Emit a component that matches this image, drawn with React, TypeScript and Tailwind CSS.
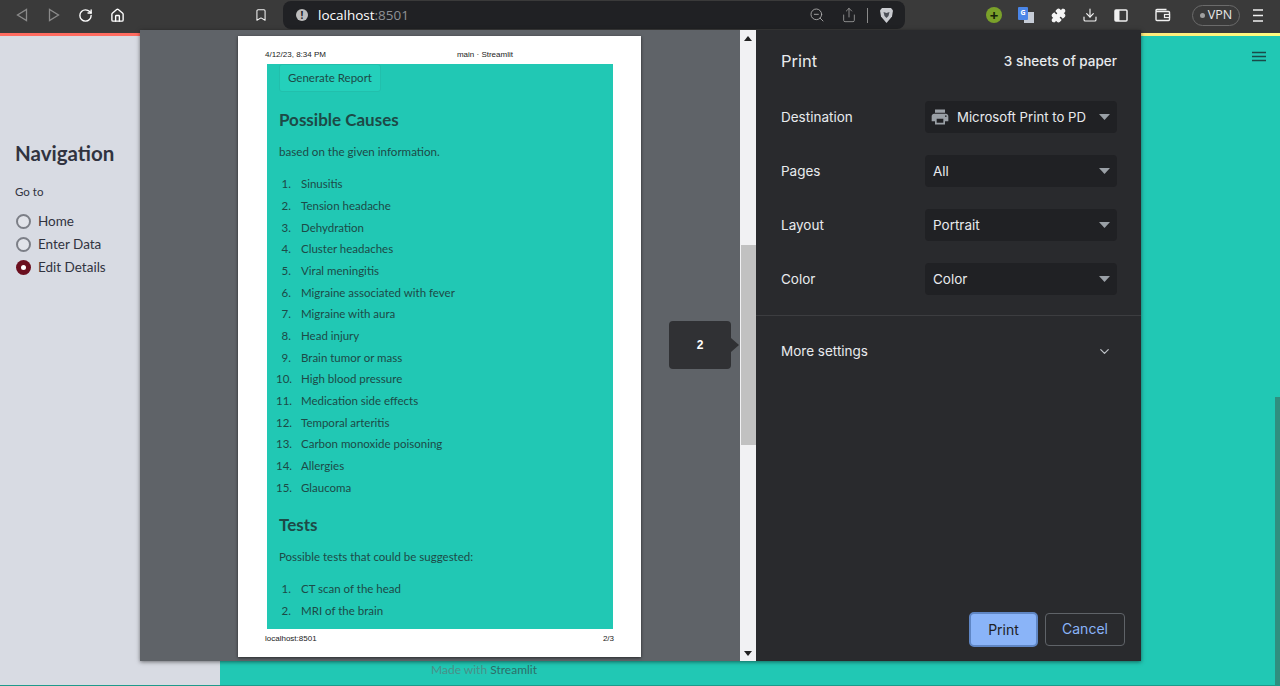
import { ChevronDown, Download, Home, Puzzle, RotateCw, Share, ZoomOut, Bookmark } from "lucide-react";

const causes = ["Sinusitis","Tension headache","Dehydration","Cluster headaches","Viral meningitis","Migraine associated with fever","Migraine with aura","Head injury","Brain tumor or mass","High blood pressure","Medication side effects","Temporal arteritis","Carbon monoxide poisoning","Allergies","Glaucoma"];
const tests = ["CT scan of the head","MRI of the brain"];

function Item({ n, text }: { n: number; text: string }) {
  return (
    <li className="flex h-[21.68px] items-center text-[11.5px] text-[#1d4a47]">
      <span className="w-[25px] pr-[10px] text-right shrink-0">{n}.</span>
      <span>{text}</span>
    </li>
  );
}

function Select({ label, value, icon }: { label: string; value: string; icon?: boolean }) {
  return (
    <div className="flex items-center justify-between h-[32px] mb-[22px]">
      <span className="text-[13.5px] text-[#e8eaed]">{label}</span>
      <div className="w-[192px] h-[32px] rounded-[4px] bg-[#202124] flex items-center pl-[8px] pr-[7px]">
        {icon && (
          <svg width="20" height="20" viewBox="0 0 24 24" className="shrink-0 ml-[-3px] mr-[4px]">
            <path d="M19 8H5c-1.66 0-3 1.34-3 3v6h4v4h12v-4h4v-6c0-1.66-1.34-3-3-3zm-3 11H8v-5h8v5zm3-7c-.55 0-1-.45-1-1s.45-1 1-1 1 .45 1 1-.45 1-1 1zm-1-9H6v4h12V3z" fill="#9aa0a6" />
          </svg>
        )}
        <span className={`${icon ? "text-[13.2px] ml-[3px] pt-[1px]" : "text-[13.5px]"} text-[#e8eaed] flex-1 whitespace-nowrap overflow-hidden`}>{value}</span>
        <svg width="11" height="6" viewBox="0 0 11 6" className="shrink-0 ml-[7px]"><path d="M0 0h11L5.5 6z" fill="#9aa0a6" /></svg>
      </div>
    </div>
  );
}

function Radio({ label, on }: { label: string; on?: boolean }) {
  return (
    <div className="flex items-center h-[23px]">
      {on ? (
        <span className="w-[15px] h-[15px] rounded-full bg-[#6b0f1f] flex items-center justify-center mr-[7px]">
          <span className="w-[5px] h-[5px] rounded-full bg-white" />
        </span>
      ) : (
        <span className="w-[15px] h-[15px] rounded-full border-2 border-[#7c7f87] bg-[#e2e4ea] mr-[7px]" />
      )}
      <span className="text-[13.5px] text-[#31333f]">{label}</span>
    </div>
  );
}

export default function App() {
  return (
    <div className="relative w-[1280px] h-[686px] overflow-hidden bg-[#21c8b4] border-b border-[#1d9a8b] font-['Lato',sans-serif]">
      {/* Browser toolbar */}
      <header className="h-[33px] pb-[3px] bg-[#3a3a3a] flex items-center text-[#f4f4f4] font-['Open_Sans',sans-serif]">
        <svg width="12" height="14" viewBox="0 0 12 14" className="ml-[16px]"><path d="M10.5 1.5v11L1.5 7z" fill="none" stroke="#8a8a8a" strokeWidth="1.3" /></svg>
        <svg width="12" height="14" viewBox="0 0 12 14" className="ml-[20px]"><path d="M1.5 1.5v11l9-5.5z" fill="none" stroke="#8a8a8a" strokeWidth="1.3" /></svg>
        <RotateCw size={15} strokeWidth={2.2} className="ml-[18px] text-white" />
        <Home size={15} strokeWidth={2.2} className="ml-[17px] text-white" />
        <Bookmark size={14} strokeWidth={1.8} className="ml-[129px]" />
        <div className="ml-[15px] w-[622px] h-[28px] rounded-[8px] bg-[#202124] flex items-center pl-[13px] pr-[11px]">
          <span className="w-[12px] h-[12px] rounded-full bg-[#bdbdbd] text-[#202124] text-[10px] font-bold flex items-center justify-center">!</span>
          <span className="ml-[10px] text-[13.5px] text-white">localhost<span className="text-[#8f9195]">:8501</span></span>
          <ZoomOut size={16} strokeWidth={1.3} className="ml-auto text-[#b0b0b0]" />
          <Share size={16} strokeWidth={1.3} className="ml-[16px] text-[#9a9a9a]" />
          <span className="w-px h-[15px] bg-[#8a8a8a] ml-[10px]" />
          <svg width="15" height="17" viewBox="0 0 15 17" className="ml-[11px]">
            <path d="M3 1h9l2 2.5-1 6-5.5 6.5L2 9.500l-1-6z" fill="#c9cbd0" />
            <path d="M4.500 5l3 1 3-1-1 4-2 2-2-2z" fill="#4d5058" />
          </svg>
        </div>
        <span className="ml-[81px] w-[16px] h-[16px] rounded-full bg-[#7aa12a] text-[#17230a] font-bold text-[15px] leading-none flex items-center justify-center">+</span>
        <span className="ml-[16px] relative w-[16px] h-[16px]">
          <span className="absolute right-0 bottom-0 w-[10px] h-[11px] bg-[#c6ccd6]" />
          <span className="absolute left-0 top-0 w-[10px] h-[13px] bg-[#4a86e8] text-white text-[7px] font-bold flex items-center justify-center rounded-[1px]">G</span>
        </span>
        <Puzzle size={15} fill="#f5f5f5" stroke="#f5f5f5" className="ml-[17px]" />
        <Download size={16} strokeWidth={1.7} className="ml-[16px]" />
        <svg width="14" height="13" viewBox="0 0 14 13" className="ml-[16px]"><rect x="1" y="1" width="12" height="11" rx="1" fill="none" stroke="#f0f0f0" strokeWidth="1.500" /><rect x="1" y="1" width="4.500" height="11" fill="#f0f0f0" /></svg>
        <svg width="17" height="14" viewBox="0 0 17 14" className="ml-[26px]"><path d="M2 3.500V11.500a1 1 0 0 0 1 1h11.500a1 1 0 0 0 1-1V4.500a1 1 0 0 0-1-1H3a1 1 0 0 1-1-1 1 1 0 0 1 1-1h9.500" fill="none" stroke="#f0f0f0" strokeWidth="1.400" /><rect x="10.500" y="6.500" width="5" height="3" fill="#3a3a3a" stroke="#f0f0f0" strokeWidth="1.200" /></svg>
        <div className="ml-[21px] w-[48px] h-[21px] rounded-full border border-[#6b6b6b] flex items-center justify-center text-[12.500px] text-[#e8e8e8]">
          <span className="w-[5px] h-[5px] rounded-full bg-[#a0a0a0] mr-[3px]" />VPN
        </div>
        <svg width="10" height="13" viewBox="0 0 10 13" className="ml-[13px]"><path d="M0 1h10M0 6.500h10M0 12h10" stroke="#f0f0f0" strokeWidth="1.500" /></svg>
      </header>

      {/* Underlying Streamlit page */}
      <div className="flex h-[652px]">
        <aside className="w-[220px] bg-[#d8dbe3] shrink-0">
          <div className="h-[3px] w-full bg-[#ff6b60]" />
          <div className="pl-[15px] pt-[104px]">
            <h2 className="text-[20.5px] font-bold text-[#31333f] leading-[26px]">Navigation</h2>
            <p className="text-[11.5px] text-[#31333f] mt-[18px] mb-[10px] leading-[16px]">Go to</p>
            <div className="pl-[1px]">
              <Radio label="Home" />
              <Radio label="Enter Data" />
              <Radio label="Edit Details" on />
            </div>
          </div>
        </aside>
        <main className="flex-1 relative">
          <div className="h-[3px] bg-[linear-gradient(90deg,#ff6b60,#fffd80)]" />
          <div className="flex justify-end pr-[14px] pt-[15px]">
            <svg width="14" height="11" viewBox="0 0 14 11"><path d="M0 1.500h14M0 5.500h14M0 9.500h14" stroke="#1a4a48" strokeWidth="1.700" /></svg>
          </div>
          <p className="absolute left-[211px] top-[628px] text-[12px] text-[#4a8f88]">Made with <span className="text-[#2e6e68]">Streamlit</span></p>
          <div className="absolute right-0 top-[364px] bottom-[-1px] w-[5px] bg-[#2f8f7f]" />
        </main>
      </div>

      {/* Print dialog */}
      <section className="absolute left-[140px] top-[30px] w-[1001px] h-[631px] flex shadow-[0_1px_4px_rgba(0,0,0,0.5)]">
        <div className="w-[616px] shrink-0 bg-[#5f6368] relative pl-[98px] pt-[6px]">
          <article className="w-[403px] h-[621px] bg-white shadow-[0_1px_3px_rgba(0,0,0,0.6)] flex flex-col font-['Liberation_Sans',sans-serif]">
            <div className="h-[28px] relative flex items-center text-[8px] text-[#222] pl-[27px] pt-[9px]">
              <span>4/12/23, 8:34 PM</span>
              <span className="ml-[131px]">main · Streamlit</span>
            </div>
            <div className="mx-[29px] w-[346px] h-[565px] bg-[#21c8b4] px-[12px] font-['Lato',sans-serif] text-[#1d4a47]">
              <button className="w-[102px] h-[28px] rounded-[3px] bg-[#24d0bb] border border-[#22bfac] text-[11.5px] text-[#1d4a47] block">Generate Report</button>
              <h3 className="mt-[17px] text-[17px] font-bold leading-[22px]">Possible Causes</h3>
              <p className="mt-[13px] text-[11.6px] leading-[16px]">based on the given information.</p>
              <ol className="mt-[13px] -ml-[3px]">
                {causes.map((c, i) => <Item key={c} n={i + 1} text={c} />)}
              </ol>
              <h3 className="mt-[16px] text-[17px] font-bold leading-[22px]">Tests</h3>
              <p className="mt-[13px] text-[11.5px] leading-[16px]">Possible tests that could be suggested:</p>
              <ol className="mt-[13px] -ml-[3px]">
                {tests.map((c, i) => <Item key={c} n={i + 1} text={c} />)}
              </ol>
            </div>
            <div className="flex justify-between items-center pl-[27px] pr-[27px] h-[19px] pt-[1px] text-[8px] text-[#222]">
              <span>localhost:8501</span>
              <span>2/3</span>
            </div>
          </article>
          <div className="absolute right-0 top-0 bottom-0 w-[16px] bg-[#f1f1f3] flex flex-col items-center">
            <svg width="8" height="5" viewBox="0 0 8 5" className="mt-[6px]"><path d="M4 0l4 5H0z" fill="#222" /></svg>
            <div className="w-[15px] h-[200px] bg-[#c1c1c1] mt-[204px]" />
            <svg width="8" height="5" viewBox="0 0 8 5" className="mt-auto mb-[5px]"><path d="M0 0h8L4 5z" fill="#222" /></svg>
          </div>
          <div className="absolute left-[529px] top-[291px] w-[62px] h-[48px] rounded-[4px] bg-[#303134] flex items-center justify-center text-white text-[12px] font-bold font-['Liberation_Sans',sans-serif]">
            2
            <span className="absolute -right-[8px] top-[17px] border-y-[7px] border-y-transparent border-l-[8px] border-l-[#303134]" />
          </div>
        </div>
        <aside className="flex-1 bg-[#292a2d] flex flex-col font-['Inter',sans-serif]">
          <div className="flex items-center justify-between pl-[25px] pr-[24px] h-[62px]">
            <span className="text-[16.500px] text-[#e8eaed]">Print</span>
            <span className="text-[13.500px] font-medium text-[#e8eaed]">3 sheets of paper</span>
          </div>
          <div className="pl-[25px] pr-[24px] pt-[9px] border-b border-[#3c3d40] h-[224px]">
            <Select label="Destination" value="Microsoft Print to PD" icon />
            <Select label="Pages" value="All" />
            <Select label="Layout" value="Portrait" />
            <Select label="Color" value="Color" />
          </div>
          <div className="flex items-center justify-between pl-[25px] pr-[29px] h-[70px]">
            <span className="text-[13.500px] text-[#e8eaed]">More settings</span>
            <ChevronDown size={15} className="text-[#bdc1c6]" />
          </div>
          <div className="mt-auto flex justify-end items-center gap-[7px] pr-[16px] pb-[14px]">
            <button className="w-[69px] h-[35px] rounded-[5px] bg-[#8ab4f8] border-2 border-[#5f86c4] text-[14px] text-[#202124] pb-[1px]">Print</button>
            <button className="w-[80px] h-[33px] rounded-[4px] border border-[#5f6368] text-[14px] text-[#8ab4f8] pb-[2px]">Cancel</button>
          </div>
        </aside>
      </section>
    </div>
  );
}
